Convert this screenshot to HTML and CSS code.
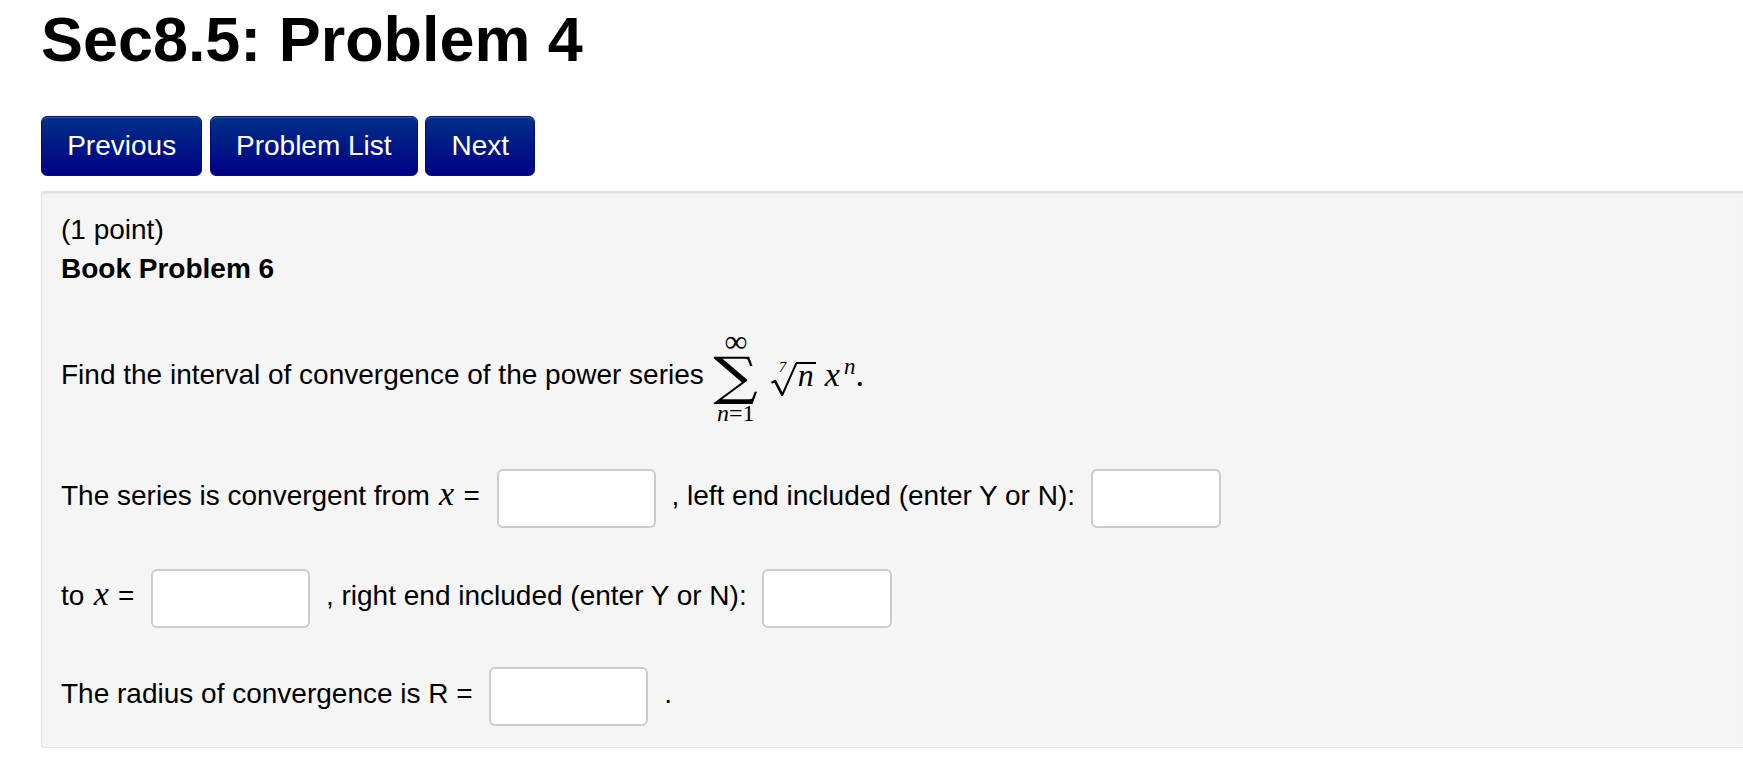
FILE: index.html
```html
<!DOCTYPE html>
<html lang="en">
  <head>
    <meta charset="UTF-8" />
    <meta name="viewport" content="width=device-width, initial-scale=1.0" />
    <title>Sec8.5: Problem 4</title>
    <link rel="stylesheet" href="styles.css">
  </head>
  <body>
    <h1 class="title">Sec8.5: Problem 4</h1>

    <div class="nav">
      <a class="btn" href="#">Previous</a>
      <a class="btn" href="#">Problem List</a>
      <a class="btn" href="#">Next</a>
    </div>

    <div class="problem">
      <div class="points">(1 point)</div>
      <div class="book">Book Problem 6</div>

      <div class="find">
        <span>Find the interval of convergence of the power series</span>
        <span class="sum">
          <span class="sum-top">∞</span>
          <span class="sum-sign">∑</span>
          <span class="sum-bottom"><i>n</i>=1</span>
        </span>
        <span class="root">
          <span class="root-index">7</span>
          <svg class="root-sign" viewBox="0 0 24 36" preserveAspectRatio="none" aria-hidden="true">
            <path d="M1 21 L5 18.5 L11 32 L22.500 1 L24 1 L24 2.500 L11.500 36 L10 36 L4 22 L1.500 23 Z" />
          </svg>
          <i class="root-body">n</i>
        </span>
        <span class="math-x"><i>x</i><sup>n</sup>.</span>
      </div>

      <div class="row">
        The series is convergent from <i class="var">x</i> =
        <input class="answer" type="text" />
        , left end included (enter Y or N):
        <input class="answer short" type="text" />
      </div>
      <div class="row">
        to <i class="var">x</i> =
        <input class="answer" type="text" />
        , right end included (enter Y or N):
        <input class="answer short" type="text" />
      </div>
      <div class="row">
        The radius of convergence is R =
        <input class="answer" type="text" />
        .
      </div>
    </div>
  </body>
</html>
```

FILE: styles.css
```css
html {
  overflow: hidden;
}
body {
  margin: 0;
  padding: 0 0 0 41px;
  background-color: white;
  color: black;
  font-family: "Liberation Sans", Arial, sans-serif;
  font-size: 28px;
}
.title {
  margin: 0;
  padding-top: 1px;
  font-size: 62.900px;
  line-height: 76px;
  font-weight: bold;
}
.nav {
  display: flex;
  gap: 7.500px;
  margin-top: 39px;
}
.btn {
  display: block;
  padding: 0 25.200px;
  height: 60px;
  line-height: 58px;
  box-sizing: border-box;
  border: 1px solid #00107a;
  border-radius: 6px;
  background: linear-gradient(#003087, #000085);
  box-shadow: inset 0 1px 0 rgba(255, 255, 255, 0.2);
  color: white;
  font-size: 28px;
  text-decoration: none;
}
.problem {
  height: 557px;
  box-sizing: border-box;
  margin-top: 15px;
  padding: 17px 19px;
  background-color: #f5f5f5;
  border: 1px solid #e0e0e0;
  border-right: none;
  border-top-width: 2px;
  border-radius: 4px 0 0 4px;
  box-shadow: inset 0 1px 1px rgba(0, 0, 0, 0.05);
}
.points {
  line-height: 39px;
}
.book {
  line-height: 39px;
  font-weight: bold;
}
.find {
  display: flex;
  align-items: center;
  margin-top: 34px;
  height: 106px;
}
.sum {
  display: flex;
  flex-direction: column;
  align-items: center;
  margin: 7px 0 0 10px;
  width: 44px;
  font-family: "DejaVu Serif", serif;
}
.sum-top {
  font-family: "Liberation Serif", serif;
  font-size: 32px;
  line-height: 18px;
}
.sum-sign {
  margin-top: 3px;
  font-size: 52px;
  line-height: 47px;
  transform: scaleX(1.2);
}
.sum-bottom {
  font-family: "Liberation Serif", serif;
  font-size: 24px;
  line-height: 26px;
}
.root {
  display: flex;
  align-items: flex-start;
  position: relative;
  margin: 8px 0 0 12px;
  font-family: "Liberation Serif", serif;
  font-size: 32px;
}
.root-index {
  position: absolute;
  left: 9px;
  top: -3px;
  font-size: 15px;
  font-style: italic;
}
.root-sign {
  width: 27px;
  height: 34px;
  margin-right: -1px;
}
.root-sign path {
  fill: black;
}
.root-body {
  border-top: 2px solid black;
  line-height: 22px;
  padding: 0 2px;
}
.math-x {
  margin-left: 9px;
  font-family: "Liberation Serif", serif;
  font-size: 34px;
}
.math-x sup {
  margin-left: 4px;
  font-size: 23px;
  font-style: italic;
  line-height: 0;
}
.var {
  margin: 0 1.500px;
  font-family: "Liberation Serif", serif;
  font-size: 34px;
}
.row {
  margin-top: 41px;
  height: 59px;
  line-height: 59px;
  white-space: nowrap;
}
.find + .row {
  margin-top: 36px;
}
.answer {
  width: 159px;
  height: 59px;
  box-sizing: border-box;
  margin: 2px 8px 0 9px;
  border: 2px solid #cccccc;
  border-radius: 6px;
  background-color: white;
  vertical-align: middle;
}
.short {
  width: 130px;
  margin-left: 8px;
}
```
